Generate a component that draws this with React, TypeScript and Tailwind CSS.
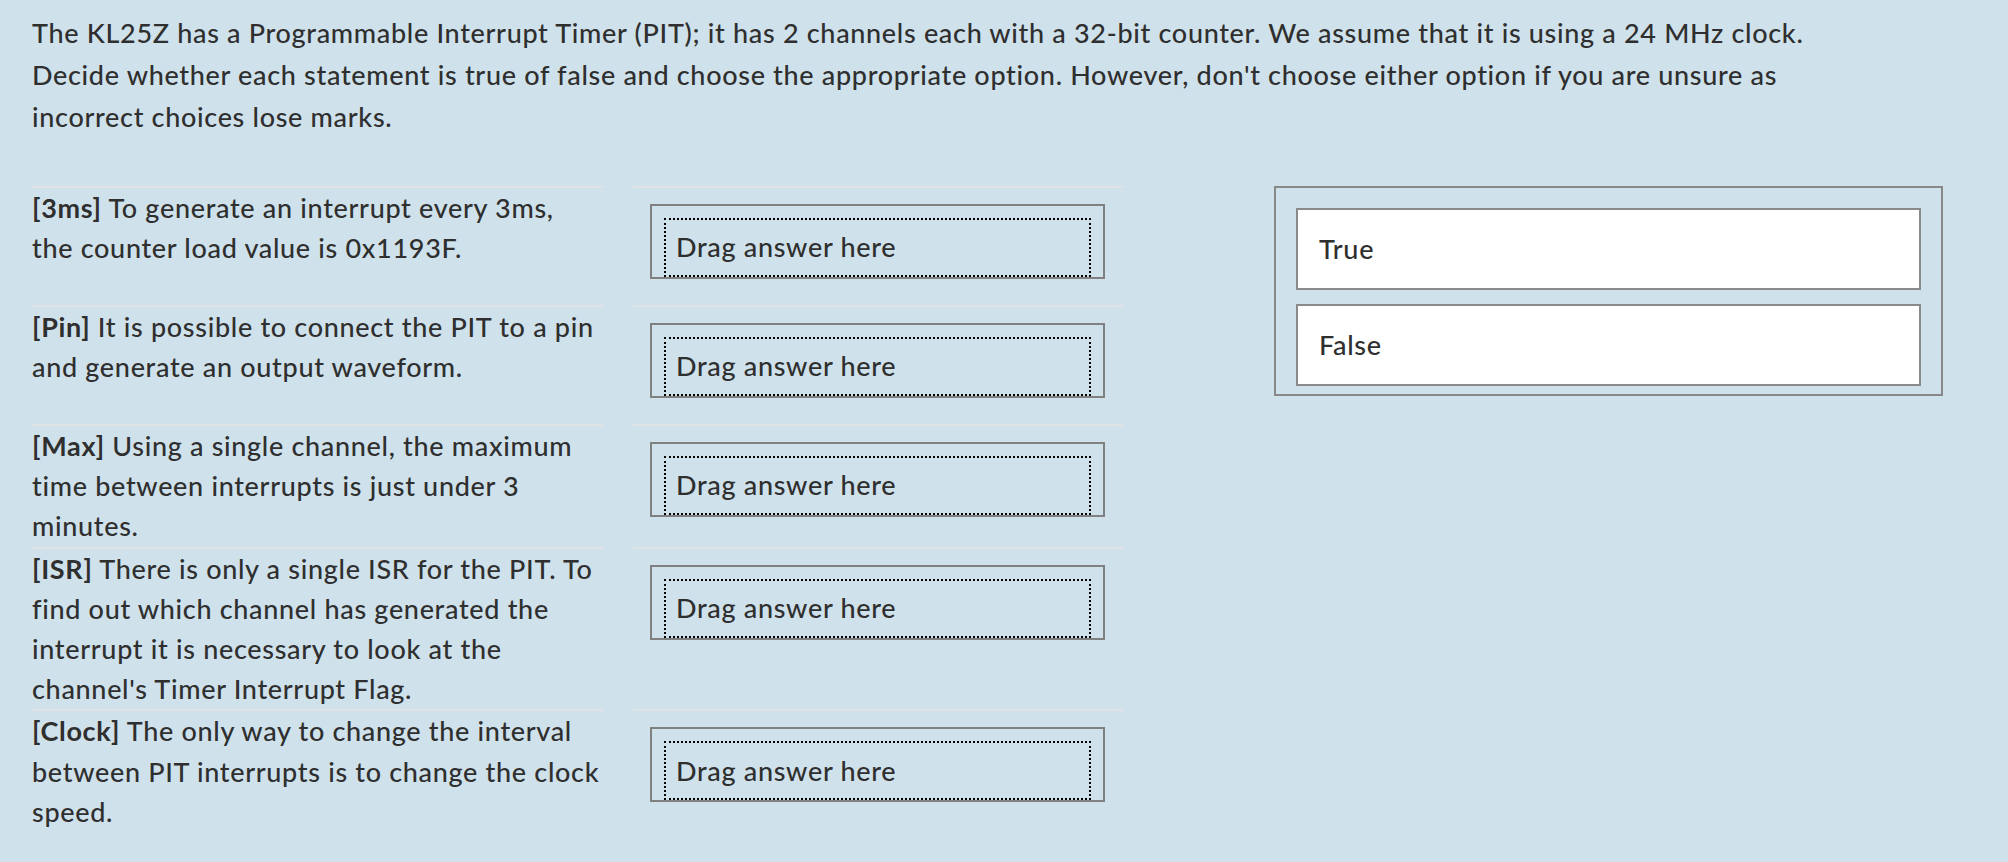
import React from "react";

type Statement = {
  tag: string;
  lines: string[];
};

// lines are broken where the original question wraps them
const statements: Statement[] = [
  { tag: "3ms", lines: ["To generate an interrupt every 3ms,", "the counter load value is 0x1193F."] },
  { tag: "Pin", lines: ["It is possible to connect the PIT to a pin", "and generate an output waveform."] },
  {
    tag: "Max",
    lines: ["Using a single channel, the maximum", "time between interrupts is just under 3", "minutes."],
  },
  {
    tag: "ISR",
    lines: [
      "There is only a single ISR for the PIT. To",
      "find out which channel has generated the",
      "interrupt it is necessary to look at the",
      "channel's Timer Interrupt Flag.",
    ],
  },
  {
    tag: "Clock",
    lines: ["The only way to change the interval", "between PIT interrupts is to change the clock", "speed."],
  },
];

const DropZone = () => (
  <div className="w-[455px] h-[75px] border-2 border-[#808080] pt-[12px] px-[12px]">
    <div className="h-[59px] border-2 border-dotted border-black flex items-center pl-[10px]">
      Drag answer here
    </div>
  </div>
);

const App: React.FC = () => {
  return (
    <div
      className="min-h-screen bg-[#cfe2ec] text-[#2f2f2f] text-[27px] font-medium tracking-[0.68px] pl-[32px] pt-[12px] pb-[29px]"
      style={{ fontFamily: '"Lato", "Open Sans", sans-serif' }}
    >
      {/* question text */}
      <div className="leading-[42px] w-[1900px]">
        The KL25Z has a Programmable Interrupt Timer (PIT); it has 2 channels each with a 32-bit counter. We assume
        that it is using a 24 MHz clock.
        <br />
        Decide whether each statement is true of false and choose the appropriate option. However, don't choose
        either option if you are unsure as
        <br />
        incorrect choices lose marks.
      </div>

      <div className="flex items-start mt-[48px]">
        <div className="grid grid-cols-[571px_490px] gap-x-[30px] leading-[40.2px]">
          {statements.map((s) => (
            <React.Fragment key={s.tag}>
              <div className="border-t-2 border-[#dfe3e6] whitespace-nowrap">
                <b className="font-bold">[{s.tag}]</b>{" "}
                {s.lines.map((line, i) => (
                  <React.Fragment key={i}>
                    {i > 0 && <br />}
                    {line}
                  </React.Fragment>
                ))}
              </div>
              <div className="border-t-2 border-[#dfe3e6] px-[17px] pt-[16px] pb-[26px]">
                <DropZone />
              </div>
            </React.Fragment>
          ))}
        </div>

        <div className="ml-[151px] w-[669px] border-2 border-[#888888] pt-[20px] px-[20px] pb-[8px] flex flex-col gap-[14px]">
          {["True", "False"].map((choice) => (
            <div
              key={choice}
              className="h-[82px] bg-white border-2 border-[#8a8a8a] flex items-center pl-[21px] leading-[40.5px]"
            >
              {choice}
            </div>
          ))}
        </div>
      </div>
    </div>
  );
};

export default App;
